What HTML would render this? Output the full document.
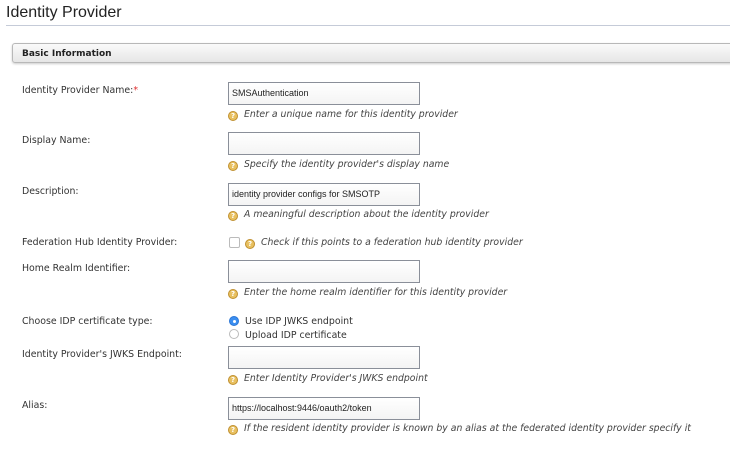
<!DOCTYPE html>
<html><head><style>
body{margin:0;background:#fff;font-family:"Liberation Sans",sans-serif;width:730px;height:456px;overflow:hidden;position:relative;color:#333}
.a{position:absolute}
h1{position:absolute;left:6px;top:4px;margin:0;font-size:16px;font-weight:normal;color:#222}
.hr{left:6px;top:25px;width:724px;height:1px;background:#c5cbd8}
.panel{left:12px;top:43px;width:730px;height:20px;border:1px solid #b8b8b8;border-radius:3px;background:linear-gradient(#fafafa,#e6e6e6);box-shadow:0 1px 2px #ccc;font-family:"DejaVu Sans",sans-serif;font-size:9px;font-weight:bold;line-height:20px;padding-left:9px;box-sizing:border-box;color:#222}
.l{left:22px;font-family:"DejaVu Sans",sans-serif;font-size:9.4px;color:#333;margin-top:1px}
.i{left:228px;width:192px;height:23px;border:1px solid #8a8f99;box-sizing:border-box;background:linear-gradient(#fff,#f4f4f4);font-size:9px;line-height:21px;padding-left:3px;color:#222}
.h{left:228px;font-family:"DejaVu Sans",sans-serif;font-size:9.3px;font-style:italic;color:#444;white-space:nowrap;margin-top:1px}
.q{display:inline-block;width:10px;height:10px;border-radius:50%;background:#e8c060;border:1px solid #c09030;box-sizing:border-box;color:#fff;font-size:7px;line-height:9px;text-align:center;font-style:normal;font-weight:bold;margin-right:6px;vertical-align:-1px}
</style></head><body>
<h1>Identity Provider</h1>
<div class="a hr"></div>
<div class="a panel">Basic Information</div>

<div class="a l" style="top:84px">Identity Provider Name:<span style="color:#e03030">*</span></div>
<div class="a i" style="top:82px">SMSAuthentication</div>
<div class="a h" style="top:108px"><span class="q">?</span>Enter a unique name for this identity provider</div>

<div class="a l" style="top:134px">Display Name:</div>
<div class="a i" style="top:132px"></div>
<div class="a h" style="top:158px"><span class="q">?</span>Specify the identity provider's display name</div>

<div class="a l" style="top:185px">Description:</div>
<div class="a i" style="top:183px">identity provider configs for SMSOTP</div>
<div class="a h" style="top:208px"><span class="q">?</span>A meaningful description about the identity provider</div>

<div class="a l" style="top:236px">Federation Hub Identity Provider:</div>
<div class="a" style="left:229px;top:237px;width:9px;height:9px;border:1px solid #bbb;border-radius:2px"></div>
<div class="a h" style="left:245px;top:236px"><span class="q">?</span>Check if this points to a federation hub identity provider</div>

<div class="a l" style="top:262px">Home Realm Identifier:</div>
<div class="a i" style="top:260px"></div>
<div class="a h" style="top:286px"><span class="q">?</span>Enter the home realm identifier for this identity provider</div>

<div class="a l" style="top:315px">Choose IDP certificate type:</div>
<div class="a" style="left:229px;top:316px;width:10px;height:10px;border-radius:50%;background:#3b8ef0;border:1px solid #2a76d6;box-sizing:border-box"><div style="width:3px;height:3px;background:#fff;border-radius:50%;margin:2.5px"></div></div>
<div class="a l" style="left:245px;top:315px">Use IDP JWKS endpoint</div>
<div class="a" style="left:229px;top:329px;width:10px;height:10px;border-radius:50%;border:1px solid #bbb;box-sizing:border-box"></div>
<div class="a l" style="left:245px;top:329px">Upload IDP certificate</div>

<div class="a l" style="top:348px">Identity Provider's JWKS Endpoint:</div>
<div class="a i" style="top:346px"></div>
<div class="a h" style="top:372px"><span class="q">?</span>Enter Identity Provider's JWKS endpoint</div>

<div class="a l" style="top:399px">Alias:</div>
<div class="a i" style="top:397px">https://localhost:9446/oauth2/token</div>
<div class="a h" style="top:422px"><span class="q">?</span>If the resident identity provider is known by an alias at the federated identity provider specify it</div>
</body></html>
